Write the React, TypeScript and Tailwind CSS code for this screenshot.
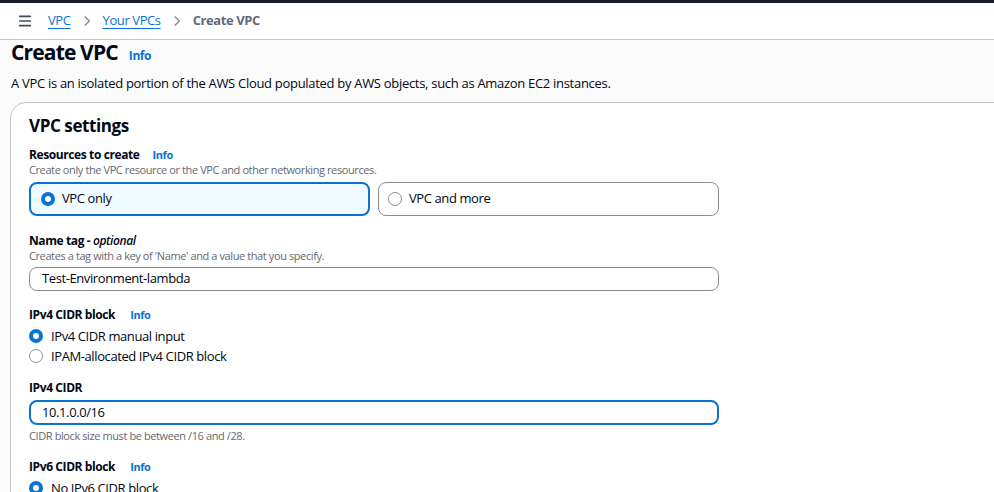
import { Menu } from 'lucide-react';

const Chevron = () => (
  <svg className="w-[12px] h-[12px] text-[#8c8c94]" viewBox="0 0 16 16" fill="none" stroke="currentColor" strokeWidth={2}>
    <path d="m5 2 6 6-6 6" />
  </svg>
);

const Info = ({ className = '' }: { className?: string }) => (
  <span className={`font-bold text-[#0972d3] ${className}`}>Info</span>
);

const Radio = ({ checked }: { checked?: boolean }) =>
  checked ? (
    <span className="w-[14px] h-[14px] rounded-full border-[4px] border-[#0972d3] bg-white shrink-0" />
  ) : (
    <span className="w-[14px] h-[14px] rounded-full border border-[#8c8c94] bg-white shrink-0" />
  );

export default function App() {
  return (
    <div className="h-[492px] w-[994px] overflow-hidden bg-[#fbfbfb] text-[#000716] font-['Open_Sans',sans-serif] tracking-[-0.025em]">
      <div className="h-[3px] bg-[#161d26]" />

      {/* Breadcrumbs */}
      <div className="h-[37px] bg-white border-b border-[#c6c6cd] flex items-center pl-[17px]">
        <Menu className="w-[16px] h-[16px] text-[#414d5c]" strokeWidth={2.5} />
        <nav className="flex items-center gap-[10px] ml-[15px] text-[13px]">
          <span className="text-[#0972d3] underline underline-offset-[3px]">VPC</span>
          <Chevron />
          <span className="text-[#0972d3] underline underline-offset-[3px]">Your VPCs</span>
          <Chevron />
          <span className="font-bold text-[#5f6b7a]">Create VPC</span>
        </nav>
      </div>

      <div className="pl-[11px]">
        <div className="flex items-baseline gap-[11px]">
          <h1 className="text-[21px] font-bold leading-[24px] tracking-[-0.04em]">Create VPC</h1>
          <Info className="text-[12px]" />
        </div>
        <p className="text-[13px] mt-[9px] leading-[18px] tracking-[-0.023em]">
          A VPC is an isolated portion of the AWS Cloud populated by AWS objects, such as Amazon EC2 instances.
        </p>
      </div>

      {/* VPC settings card */}
      <div className="ml-[10px] mt-[10px] w-[1100px] bg-white border border-[#c6c6cd] rounded-[16px] pl-[18px] pt-[12px] pb-[20px]">
        <h2 className="text-[17px] font-bold leading-[22px]">VPC settings</h2>

        <div className="w-[690px]">
          <div className="mt-[10px] flex items-baseline gap-[13px] leading-[16px]">
            <span className="text-[12px] font-bold">Resources to create</span>
            <Info className="text-[11px]" />
          </div>
          <p className="text-[11px] text-[#656871] leading-[14px]">
            Create only the VPC resource or the VPC and other networking resources.
          </p>
          <div className="grid grid-cols-2 gap-[8px] mt-[5px]">
            <div className="h-[34px] rounded-[8px] border-2 border-[#0972d3] bg-[#f0fbff] flex items-center gap-[7px] pl-[10px] text-[13px]">
              <Radio checked />
              VPC only
            </div>
            <div className="h-[34px] rounded-[8px] border border-[#8c8c94] flex items-center gap-[7px] pl-[9px] text-[13px]">
              <Radio />
              VPC and more
            </div>
          </div>

          <div className="mt-[15px] leading-[16px]">
            <span className="text-[12px] font-bold">
              Name tag - <i className="font-semibold">optional</i>
            </span>
          </div>
          <p className="text-[11px] text-[#656871] leading-[14px]">
            Creates a tag with a key of 'Name' and a value that you specify.
          </p>
          <div className="h-[24px] mt-[4px] rounded-[8px] border border-[#8c8c94] flex items-center pl-[12px] text-[13px]">
            Test-Environment-lambda
          </div>

          <div className="mt-[16px] flex items-baseline gap-[15px] leading-[16px]">
            <span className="text-[12px] font-bold">IPv4 CIDR block</span>
            <Info className="text-[11px]" />
          </div>
          <div className="flex flex-col gap-[2px] mt-[4px] text-[13px] leading-[18px]">
            <label className="flex items-center gap-[8px]">
              <Radio checked />
              IPv4 CIDR manual input
            </label>
            <label className="flex items-center gap-[8px]">
              <Radio />
              IPAM-allocated IPv4 CIDR block
            </label>
          </div>

          <div className="mt-[13px] leading-[16px]">
            <span className="text-[12px] font-bold">IPv4 CIDR</span>
          </div>
          <div className="h-[25px] mt-[4px] rounded-[8px] border-2 border-[#0972d3] flex items-center pl-[11px] text-[13px]">
            10.1.0.0/16
          </div>
          <p className="text-[11px] text-[#656871] leading-[14px] mt-[4px]">
            CIDR block size must be between /16 and /28.
          </p>

          <div className="mt-[16px] flex items-baseline gap-[15px] leading-[16px]">
            <span className="text-[12px] font-bold">IPv6 CIDR block</span>
            <Info className="text-[11px]" />
          </div>
          <div className="flex flex-col mt-[4px] text-[13px] leading-[18px]">
            <label className="flex items-center gap-[8px]">
              <Radio checked />
              No IPv6 CIDR block
            </label>
          </div>
        </div>
      </div>
    </div>
  );
}
